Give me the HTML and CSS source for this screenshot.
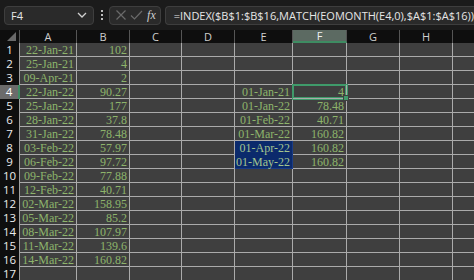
FILE: index.html
```html
<!DOCTYPE html>
<html>
<head>
<meta charset="utf-8">
<link rel="stylesheet" href="styles.css">
</head>
<body>
<div class="app">
  <div class="fbar">
    <div class="namebox"><span>F4</span>
      <svg class="chev" width="10" height="6" viewBox="0 0 10 6"><path d="M1 1 L5 5 L9 1" fill="none" stroke="#d0d0d0" stroke-width="1.3"/></svg>
    </div>
    <div class="dots"><i></i><i></i><i></i></div>
    <div class="fxbox">
      <svg width="12" height="12" viewBox="0 0 12 12"><path d="M1.5 1.5 L10.5 10.5 M10.5 1.5 L1.5 10.5" stroke="#6a6a6a" stroke-width="1.2" fill="none"/></svg>
      <svg width="13" height="12" viewBox="0 0 13 12"><path d="M1 6.5 L4.5 10 L12 2" stroke="#6a6a6a" stroke-width="1.2" fill="none"/></svg>
      <span class="fx">fx</span>
    </div>
    <div class="formula">=INDEX($B$1:$B$16,MATCH(EOMONTH(E4,0),$A$1:$A$16))</div>
  </div>
  <div class="grid" id="grid"></div>
</div>
<script>
const cols = ['A','B','C','D','E','F','G','H','I'];
const A = ['22-Jan-21','25-Jan-21','09-Apr-21','22-Jan-22','25-Jan-22','28-Jan-22','31-Jan-22','03-Feb-22','06-Feb-22','09-Feb-22','12-Feb-22','02-Mar-22','05-Mar-22','08-Mar-22','11-Mar-22','14-Mar-22'];
const B = ['102','4','2','90.27','177','37.8','78.48','57.97','97.72','77.88','40.71','158.95','85.2','107.97','139.6','160.82'];
const E = {4:'01-Jan-21',5:'01-Jan-22',6:'01-Feb-22',7:'01-Mar-22',8:'01-Apr-22',9:'01-May-22'};
const F = {4:'4',5:'78.48',6:'40.71',7:'160.82',8:'160.82',9:'160.82'};
const g = document.getElementById('grid');
let h = '<div class="corner"><span class="tri"></span></div>';
cols.forEach(c => { h += '<div class="ch' + (c==='F'?' sel':'') + (c==='I'?' last':'') + '">' + (c==='I'?'':c) + '</div>'; });
for (let r = 1; r <= 17; r++) {
  h += '<div class="rh' + (r===4?' sel':'') + '">' + r + '</div>';
  cols.forEach(c => {
    let v = '', cls = 'cell';
    if (c==='A' && A[r-1]) v = A[r-1];
    if (c==='B' && B[r-1]) v = B[r-1];
    if (c==='E' && E[r]) v = E[r];
    if (c==='F' && F[r]) v = F[r];
    if (c==='E' && (r===8||r===9)) cls += ' hl' + (r===8?' hlt':' hlb');
    if (c==='F' && r===4) cls += ' active';
    if (c==='I') cls += ' last';
    h += '<div class="' + cls + '">' + v + (c==='F'&&r===4?'<span class="handle"></span>':'') + '</div>';
  });
}
g.innerHTML = h;
</script>
</body>
</html>
```
FILE: styles.css
```css
html, body { margin: 0; padding: 0; background: #1b1b1b; overflow: hidden; }
.app { width: 474px; height: 280px; overflow: hidden; font-family: "Open Sans", "Noto Sans", sans-serif; }
.fbar { display: flex; align-items: center; height: 30px; padding: 0 0 0 4px; box-sizing: border-box; background: #1b1b1b; }
.namebox, .fxbox, .formula { height: 19px; box-sizing: border-box; background: #2a2a2a; border: 1px solid #3e3e3e; border-radius: 4px; display: flex; align-items: center; color: #e6e6e6; font-size: 11px; }
.namebox { width: 94px; padding: 0 6px; justify-content: space-between; }
.dots { width: 15px; display: flex; flex-direction: column; align-items: center; gap: 2px; }
.dots i { width: 2px; height: 2px; background: #bdbdbd; display: block; }
.fxbox { width: 54px; margin-right: 4px; padding: 0 4px 0 5px; justify-content: space-between; }
.fx { font-family: "Liberation Serif", serif; font-style: italic; color: #cfcfcf; font-size: 12px; }
.formula { flex: 1; padding-left: 8px; border-right: none; border-radius: 4px 0 0 4px; white-space: nowrap; font-size: 11px; }
.grid { display: grid; grid-template-columns: 20px 57px 53px 52px 53px 58px 54px 53px 53px 1fr; grid-template-rows: 13px repeat(17, 14px); }
.corner { background: #0e0e0e; border-right: 1px solid #555; position: relative; }
.tri { position: absolute; right: 3px; bottom: 2px; width: 0; height: 0; border-left: 9px solid transparent; border-bottom: 9px solid #6a6a6a; }
.ch { background: #0e0e0e; color: #cfcfcf; font-size: 11px; text-align: center; line-height: 13px; border-right: 1px solid #555; box-sizing: border-box; }
.ch.sel { background: #5c6a62; color: #f0f0f0; border-bottom: 2px solid #3e8c62; line-height: 12px; }
.ch.last { border-right: none; }
.rh { background: #0e0e0e; color: #ececec; font-size: 11.5px; text-align: center; line-height: 14px; border-right: 1px solid #a0a0a0; box-sizing: border-box; }
.rh.sel { background: #6b6b6b; color: #fff; border-right: 2px solid #3e8c62; }
.cell { background: #3f3f3f; border-right: 1px solid #ababab; border-bottom: 1px solid #ababab; box-sizing: border-box; color: #8db46b; font-family: "Liberation Serif", serif; font-size: 12px; line-height: 14px; text-align: right; padding-right: 2px; white-space: nowrap; position: relative; }
.cell.last { border-right: none; }
.cell.hl { background: #0b2a6c; color: #a3c48f; border-right-color: #1a3c86; }
.cell.hlt { border-bottom-color: #0b2a6c; }
.cell.hlb { border-bottom-color: #1a3c86; }
.cell.active { box-shadow: inset 0 0 0 1px #3f9a6a; outline: 1px solid #3f9a6a; z-index: 2; }
.handle { position: absolute; right: -3px; bottom: -3px; width: 4px; height: 4px; background: #3f9a6a; border: 1px solid #3f3f3f; }
```
